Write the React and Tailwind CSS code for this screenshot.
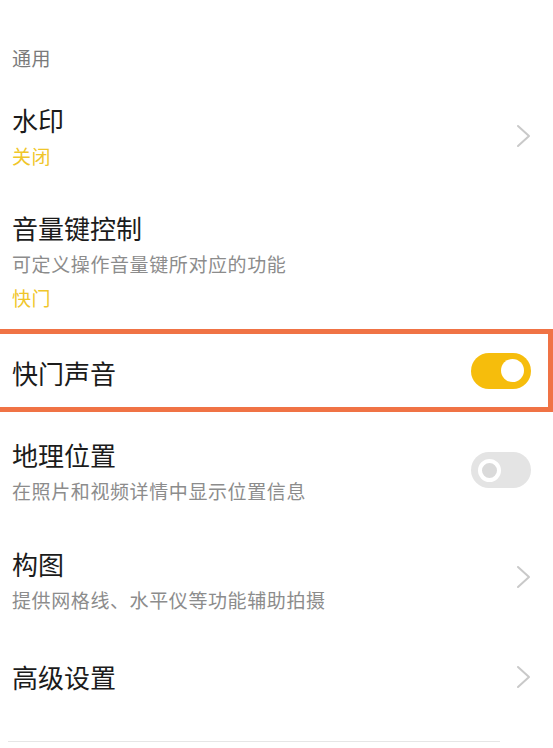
import React from 'react';

const font = { fontFamily: '"Noto Sans CJK SC", "Noto Sans", sans-serif' };

const Chevron = ({ className = '' }) => (
    <svg width="16" height="24" viewBox="0 0 16 24" className={className}>
        <polyline points="2,2 13,12 2,22" fill="none" stroke="#c9c9c9" strokeWidth="2" strokeLinecap="round" strokeLinejoin="round" />
    </svg>
);

const Toggle = ({ on }) => (
    <div
        className={
            on
                ? 'w-[60px] h-[36px] rounded-full bg-[#f6bd0c] flex items-center justify-end pr-[7px]'
                : 'w-[60px] h-[36px] rounded-full bg-[#e4e4e4] flex items-center pl-[7px]'
        }
    >
        {on ? (
            <div className="w-[23px] h-[23px] rounded-full bg-white" />
        ) : (
            <div className="w-[23px] h-[23px] rounded-full border-[4px] border-white bg-[#dadada]" />
        )}
    </div>
);

const Title = ({ children }) => (
    <div className="text-[26px] leading-[36px] text-[#1b1b1b]">{children}</div>
);

const Sub = ({ children }) => (
    <div className="text-[19px] leading-[36px] tracking-[0.6px] text-[#8c8c8c]">{children}</div>
);

const Value = ({ children, className = 'leading-[36px]' }) => (
    <div className={`text-[19px] tracking-[0.6px] text-[#f0c62a] ${className}`}>{children}</div>
);

export default function App() {
    return (
        <div className="w-[553px] h-[748px] bg-white overflow-hidden" style={font}>
            <div className="pt-[46px] pl-[12px] text-[19px] leading-[24px] tracking-[0.6px] text-[#7a7a7a]">通用</div>

            <div className="mt-[32px] pl-[12px] pr-[21px] flex items-start justify-between">
                <div>
                    <Title>水印</Title>
                    <Value>关闭</Value>
                </div>
                <Chevron className="mt-[22px]" />
            </div>

            <div className="mt-[36px] pl-[12px] pr-[21px]">
                <Title>音量键控制</Title>
                <Sub>可定义操作音量键所对应的功能</Sub>
                <Value className="leading-[32px]">快门</Value>
            </div>

            <div className="mt-[15px] h-[83px] border-y-[5px] border-r-[5px] border-[#f07345] pl-[12px] pr-[17px] flex items-center justify-between">
                <div className="pt-[4px]">
                    <Title>快门声音</Title>
                </div>
                <Toggle on />
            </div>

            <div className="mt-[25px] pl-[12px] pr-[22px] flex items-start justify-between">
                <div>
                    <Title>地理位置</Title>
                    <Sub>在照片和视频详情中显示位置信息</Sub>
                </div>
                <div className="mt-[15px]">
                    <Toggle />
                </div>
            </div>

            <div className="mt-[37px] pl-[12px] pr-[21px] flex items-start justify-between">
                <div>
                    <Title>构图</Title>
                    <Sub>提供网格线、水平仪等功能辅助拍摄</Sub>
                </div>
                <Chevron className="mt-[19px]" />
            </div>

            <div className="mt-[41px] pl-[12px] pr-[21px] flex items-center justify-between">
                <Title>高级设置</Title>
                <Chevron />
            </div>

            <div className="mt-[46px] ml-[8px] w-[492px] h-px bg-[#e6e6e6]" />
        </div>
    );
}
